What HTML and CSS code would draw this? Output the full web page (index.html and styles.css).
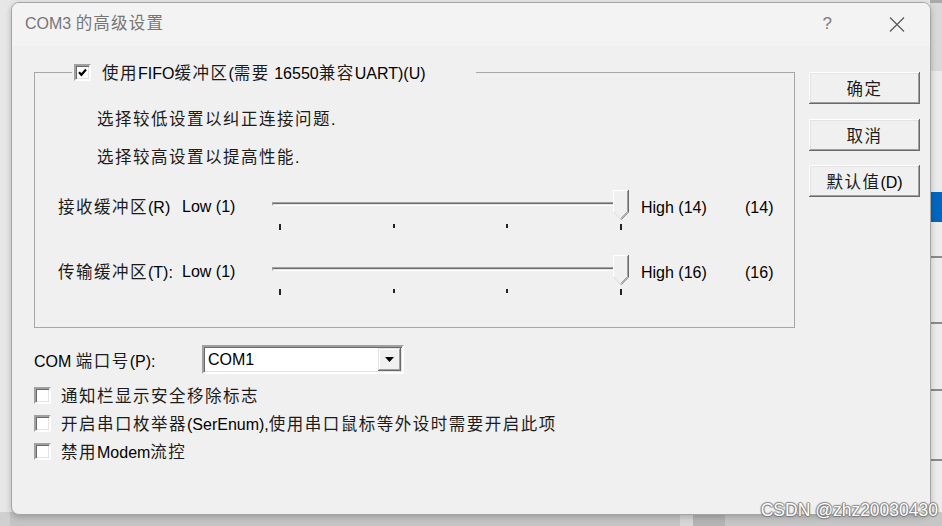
FILE: index.html
```html
<!DOCTYPE html>
<html lang="zh-CN">
<head>
<meta charset="utf-8">
<title>COM3 的高级设置</title>
<link rel="stylesheet" href="styles.css">
</head>
<body>
<div class="desk">
  <div class="bg-right"></div>
  <div class="bg-bottom"></div>
  <div class="dialog">
    <div class="titlebar">
      <div class="title">COM3 <span class="z">的高级设置</span></div>
      <div class="tb-btns">
        <span class="help">?</span>
        <svg class="close" width="16" height="15" viewBox="0 0 16 15"><path d="M1 0.5 L15 14.5 M15 0.5 L1 14.5" stroke="#555" stroke-width="1.1" fill="none"/></svg>
      </div>
    </div>
    <div class="main">
      <div class="left">
        <fieldset class="group">
          <legend class="group-legend">
            <div class="legend-inner">
              <span class="cb"><svg width="13" height="13" viewBox="0 0 13 13"><path d="M3 6.2 L5.4 8.8 L10 3.6" stroke="#000" stroke-width="2.2" fill="none"/></svg></span>
              <span class="legend-text"><span class="z">使用</span>FIFO<span class="z">缓冲区</span>(<span class="z">需要</span> 16550<span class="z">兼容</span>UART)(U)</span>
            </div>
          </legend>
          <p class="hint"><span class="z">选择较低设置以纠正连接问题</span>.</p>
          <p class="hint"><span class="z">选择较高设置以提高性能</span>.</p>
          <div class="srow">
            <span class="txt"><span class="z">接收缓冲区</span>(R)</span>
            <span class="txt">Low (1)</span>
            <div class="slider">
              <div class="track"></div>
              <div class="ticks"><i class="long"></i><i></i><i></i><i class="long"></i></div>
              <svg class="thumb" width="16" height="30" viewBox="0 0 16 30">
                <polygon points="0,0 16,0 16,22 8,30 0,22" fill="#f0f0f0"/>
                <polyline points="0.5,22 0.5,0.5 15,0.5" stroke="#fff" fill="none"/>
                <polyline points="0.5,22 7.8,29.3" stroke="#d8d8d8" fill="none"/>
                <polyline points="14.5,1 14.5,21.6 8,28.2" stroke="#a0a0a0" fill="none"/>
                <polyline points="15.5,0 15.5,22.1 8,29.7" stroke="#696969" fill="none"/>
              </svg>
            </div>
            <span class="txt high">High (14)</span>
            <span class="txt high">(14)</span>
          </div>
          <div class="srow">
            <span class="txt"><span class="z">传输缓冲区</span>(T):</span>
            <span class="txt">Low (1)</span>
            <div class="slider">
              <div class="track"></div>
              <div class="ticks"><i class="long"></i><i></i><i></i><i class="long"></i></div>
              <svg class="thumb" width="16" height="30" viewBox="0 0 16 30">
                <polygon points="0,0 16,0 16,22 8,30 0,22" fill="#f0f0f0"/>
                <polyline points="0.5,22 0.5,0.5 15,0.5" stroke="#fff" fill="none"/>
                <polyline points="0.5,22 7.8,29.3" stroke="#d8d8d8" fill="none"/>
                <polyline points="14.5,1 14.5,21.6 8,28.2" stroke="#a0a0a0" fill="none"/>
                <polyline points="15.5,0 15.5,22.1 8,29.7" stroke="#696969" fill="none"/>
              </svg>
            </div>
            <span class="txt high">High (16)</span>
            <span class="txt high">(16)</span>
          </div>
        </fieldset>
        <div class="port-row">
          <span class="port-label">COM <span class="z">端口号</span>(P):</span>
          <div class="combo">
            <span class="combo-text">COM1</span>
            <span class="combo-btn"><svg width="9" height="5" viewBox="0 0 9 5"><polygon points="0,0 9,0 4.5,5" fill="#000"/></svg></span>
          </div>
        </div>
        <ul class="checks">
          <li><span class="cb"></span><span class="z">通知栏显示安全移除标志</span></li>
          <li><span class="cb"></span><span><span class="z">开启串口枚举器</span>(SerEnum),<span class="z">使用串口鼠标等外设时需要开启此项</span></span></li>
          <li><span class="cb"></span><span><span class="z">禁用</span>Modem<span class="z">流控</span></span></li>
        </ul>
      </div>
      <div class="buttons">
        <button class="btn"><span class="z">确定</span></button>
        <button class="btn"><span class="z">取消</span></button>
        <button class="btn"><span class="z">默认值</span>(D)</button>
      </div>
    </div>
  </div>
  <div class="watermark">CSDN @zhz20030430</div>
</div>
</body>
</html>
```
FILE: styles.css
```css
html, body {
  margin: 0;
  padding: 0;
}

body {
  font-family: "Liberation Sans", "Noto Sans CJK SC", sans-serif;
  font-size: 16px;
  color: #000;
}

.z {
  font-size: 16.5px;
  letter-spacing: 1.5px;
  color: #1c1c1c;
}

.desk {
  position: relative;
  width: 942px;
  height: 526px;
  overflow: hidden;
  background: #e7e7e7;
}

.bg-right {
  position: absolute;
  left: 930px;
  top: 0;
  width: 12px;
  height: 526px;
  background: linear-gradient(to bottom,
    #a9a9a9 0 3px,
    #d9d9d9 3px 71px,
    #ebebeb 71px 192px,
    #0067c0 192px 222px,
    #ececec 222px 256px,
    #8a8a8a 256px 258px,
    #ececec 258px 322px,
    #8a8a8a 322px 324px,
    #ececec 324px 389px,
    #8a8a8a 389px 391px,
    #ececec 391px 459px,
    #8a8a8a 459px 461px,
    #ececec 461px);
}

.bg-bottom {
  position: absolute;
  left: 0;
  right: 0;
  top: 512px;
  bottom: 0;
  background: linear-gradient(to right, #d0d0d0 0 10px, #c4c4c4 10px 680px, #d6d6d6 680px 693px, #b4b4b4 693px 725px, #c6c6c6 725px);
}

.dialog {
  position: absolute;
  left: 11px;
  top: 2px;
  width: 920px;
  height: 513px;
  box-sizing: border-box;
  border: 1px solid #a5a5a5;
  border-radius: 8px;
  background: #f0f0f0;
  box-shadow: 0 2px 6px rgba(0, 0, 0, 0.22);
  display: flex;
  flex-direction: column;
  overflow: hidden;
}

.titlebar {
  height: 43px;
  flex: none;
  display: flex;
  padding-left: 13px;
  background: #f3f3f3;
}

.title {
  margin-top: 10px;
  line-height: 20px;
  font-size: 16px;
  color: #767676;
}

.title .z {
  font-size: 16.5px;
  letter-spacing: 1.2px;
  color: #767676;
}

.tb-btns {
  margin-left: auto;
  display: flex;
  align-items: flex-start;
  padding-right: 25px;
}

.help {
  margin-top: 11px;
  line-height: 20px;
  font-size: 17px;
  color: #7a7a7a;
  margin-right: 57px;
}

.close {
  margin-top: 14px;
}

.main {
  flex: 1;
  display: grid;
  grid-template-columns: 761px 111px;
  column-gap: 14px;
  padding: 16px 10px 0 22px;
  align-items: start;
}

.group {
  margin: 0;
  padding: 18px 0 21px;
  border: 1px solid #a7a7a7;
  min-width: 0;
}

.group-legend {
  margin-left: 37px;
  padding: 0 50px 0 2px;
  height: 20px;
}

.legend-inner {
  display: flex;
  align-items: center;
  gap: 11px;
  height: 20px;
  line-height: 20px;
}

.legend-text {
  margin-top: 2px;
}

.cb {
  flex: none;
  width: 17px;
  height: 17px;
  box-sizing: border-box;
  background: #fff;
  border: 2px solid;
  border-color: #a0a0a0 #fff #fff #a0a0a0;
  box-shadow: inset 1px 1px 0 #696969, inset -1px -1px 0 #e3e3e3;
  display: flex;
  align-items: center;
  justify-content: center;
}

.hint {
  margin: 0;
  padding-left: 62px;
  height: 38px;
  line-height: 38px;
}

.srow {
  display: grid;
  grid-template-columns: 124px 90px 369px 104px auto;
  height: 65px;
  padding-left: 23px;
  align-items: start;
}

.txt {
  margin-top: 21px;
  line-height: 20px;
  white-space: nowrap;
}

.txt.high {
  margin-top: 22px;
}

.slider {
  position: relative;
  width: 357px;
  height: 65px;
}

.track {
  margin-top: 26px;
  width: 354px;
  height: 4px;
  box-sizing: border-box;
  border-top: 1px solid #a0a0a0;
  border-left: 1px solid #a0a0a0;
  border-bottom: 1px solid #fff;
  border-right: 1px solid #fff;
  background: linear-gradient(to bottom, #6e6e6e 0 1px, #e3e3e3 1px);
}

.ticks {
  display: flex;
  justify-content: space-between;
  align-items: flex-start;
  width: 343px;
  margin: 18px 0 0 7px;
}

.ticks i {
  display: block;
  width: 2px;
  height: 4px;
  background: #222;
}

.ticks i.long {
  height: 6px;
}

.thumb {
  position: absolute;
  left: 341px;
  top: 14px;
}

.port-row {
  display: flex;
  align-items: center;
  margin-top: 17px;
  height: 29px;
}

.port-label {
  width: 168px;
  flex: none;
}

.combo {
  width: 202px;
  height: 29px;
  box-sizing: border-box;
  border: 2px solid;
  border-color: #a0a0a0 #fff #fff #a0a0a0;
  box-shadow: inset 1px 1px 0 #696969, inset -1px -1px 0 #e3e3e3;
  background: #fff;
  display: flex;
  align-items: center;
}

.combo-text {
  padding-left: 4px;
}

.combo-btn {
  margin-left: auto;
  margin-right: 1px;
  width: 23px;
  height: 23px;
  box-sizing: border-box;
  background: #f0f0f0;
  box-shadow: inset -1px -1px 0 #696969, inset 1px 1px 0 #e3e3e3, inset -2px -2px 0 #a0a0a0, inset 2px 2px 0 #fff;
  display: flex;
  align-items: center;
  justify-content: center;
}

.checks {
  list-style: none;
  margin: 7px 0 0;
  padding: 0;
}

.checks li {
  display: flex;
  align-items: center;
  gap: 10px;
  height: 28px;
  white-space: nowrap;
}

.buttons {
  display: flex;
  flex-direction: column;
  gap: 14.5px;
  margin-top: 10px;
}

.btn {
  height: 32px;
  padding: 0;
  border: 0;
  box-sizing: border-box;
  background: #f0f0f0;
  font-family: inherit;
  font-size: 16px;
  color: #000;
  box-shadow: inset -1px -1px 0 #696969, inset 1px 1px 0 #fff, inset -2px -2px 0 #a0a0a0, inset 2px 2px 0 #e3e3e3;
}

.watermark {
  position: absolute;
  right: 4px;
  top: 499px;
  font-size: 17.5px;
  line-height: 22px;
  color: #fff;
  text-shadow: 1px 0 1px #777, -1px 0 1px #777, 0 1px 1px #777, 0 -1px 1px #888;
}
```
